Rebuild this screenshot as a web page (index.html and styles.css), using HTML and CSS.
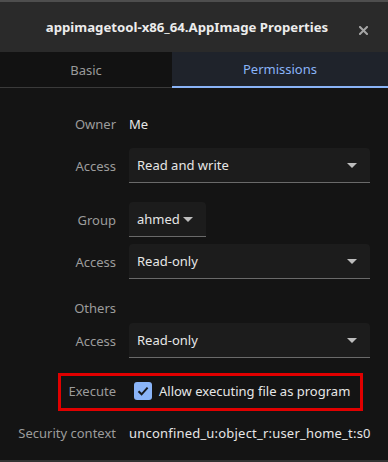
FILE: index.html
```html
<!DOCTYPE html>
<html lang="en">
<head>
  <meta charset="UTF-8" />
  <title>appimagetool-x86_64.AppImage Properties</title>
  <link rel="stylesheet" href="styles.css">
</head>
<body>

  <div class="window">

    <!-- title bar -->
    <div class="titlebar">
      <span class="title">appimagetool-x86_64.AppImage Properties</span>
      <svg class="close" width="9" height="9" viewBox="0 0 9 9">
        <path d="M1 1 L8 8 M8 1 L1 8" stroke="#a6a6a6" stroke-width="2" stroke-linecap="square" />
      </svg>
    </div>

    <!-- tabs -->
    <div class="tabs">
      <div class="tab">Basic</div>
      <div class="tab active">Permissions</div>
    </div>

    <!-- permissions -->
    <div class="content">
      <div class="row owner">
        <span class="label">Owner</span>
        <span class="value">Me</span>
      </div>

      <div class="row access1">
        <span class="label">Access</span>
        <div class="dropdown">
          <span>Read and write</span>
          <span class="arrow"></span>
        </div>
      </div>

      <div class="row group">
        <span class="label">Group</span>
        <div class="dropdown small">
          <span>ahmed</span>
          <span class="arrow"></span>
        </div>
      </div>

      <div class="row access2">
        <span class="label">Access</span>
        <div class="dropdown">
          <span>Read-only</span>
          <span class="arrow"></span>
        </div>
      </div>

      <div class="row others">
        <span class="label">Others</span>
      </div>

      <div class="row access3">
        <span class="label">Access</span>
        <div class="dropdown">
          <span>Read-only</span>
          <span class="arrow"></span>
        </div>
      </div>

      <div class="row execute">
        <span class="label">Execute</span>
        <label class="check">
          <span class="box">
            <svg width="18" height="18" viewBox="0 0 18 18">
              <path d="M4.5 9.2 L7.6 12.3 L13.6 5.6" fill="none" stroke="#161a20" stroke-width="2" />
            </svg>
          </span>
          <span class="value">Allow executing file as program</span>
        </label>
        <span class="highlight"></span>
      </div>

      <div class="row security">
        <span class="label">Security context</span>
        <span class="value context">unconfined_u:object_r:user_home_t:s0</span>
      </div>
    </div>

  </div>

</body>
</html>
```

FILE: styles.css
```css
html, body {
  height: 100%;
  margin: 0;
  font-family: 'Noto Sans', 'Open Sans', sans-serif;
  font-size: 13px;
  background-color: #141414;
}

.window {
  height: 100%;
  display: flex;
  flex-direction: column;
  box-sizing: border-box;
  border-bottom: 2px solid #333;
}

.titlebar {
  height: 50px;
  border-top: 2px solid #4e4e4e;
  background-color: #2a2a2a;
  display: flex;
  align-items: center;
  justify-content: center;
  position: relative;
}

.title {
  color: #ececec;
  font-weight: bold;
  font-size: 13.2px;
  margin-right: 14px;
}

.close {
  position: absolute;
  right: 20px;
  top: 24px;
}

.tabs {
  display: flex;
  height: 36px;
}

.tab {
  flex: 0 0 172px;
  display: flex;
  align-items: center;
  justify-content: center;
  background-color: #121212;
  color: #9a9a9a;
  box-sizing: border-box;
  border-bottom: 1px solid #3a3a3a;
  padding-top: 1px;
}

.tab.active {
  flex: 1;
  background-color: #1f232b;
  color: #8ab4f8;
  border-bottom: 2px solid #8ab4f8;
  padding-top: 0;
}

.content {
  flex: 1;
  padding-right: 18px;
}

.row {
  display: grid;
  grid-template-columns: 116px 1fr;
  column-gap: 13px;
  align-items: center;
  min-height: 24px;
  position: relative;
}

.label {
  justify-self: end;
  color: #9c9c9c;
}

.value {
  color: #e6e6e6;
}

.context {
  letter-spacing: 0.2px;
}

.owner { margin-top: 24px; }
.access1 { margin-top: 12px; }
.group { margin-top: 19px; }
.access2 { margin-top: 7px; }
.others { margin-top: 17px; }
.access3 { margin-top: 3px; }
.execute { margin-top: 21px; }
.security { margin-top: 18px; }

.dropdown {
  height: 35px;
  box-sizing: border-box;
  display: flex;
  align-items: center;
  justify-content: space-between;
  padding: 0 13px 0 8px;
  background-color: #1c1c1c;
  border-radius: 4px 4px 0 0;
  border-bottom: 1px solid #6a6a6a;
  color: #e6e6e6;
}

.dropdown.small {
  justify-self: start;
  width: 77px;
  justify-content: flex-start;
  gap: 3px;
}

.arrow {
  width: 0;
  height: 0;
  border-left: 5px solid transparent;
  border-right: 5px solid transparent;
  border-top: 5px solid #bdbdbd;
}

.check {
  display: flex;
  align-items: center;
  gap: 7px;
  margin-left: 5px;
}

.box {
  width: 18px;
  height: 18px;
  border-radius: 3px;
  background-color: #8ab4f8;
  display: flex;
}

.highlight {
  position: absolute;
  left: 58px;
  top: -6px;
  width: 305px;
  height: 38px;
  box-sizing: border-box;
  border: 3px solid #e00000;
  pointer-events: none;
}
```
